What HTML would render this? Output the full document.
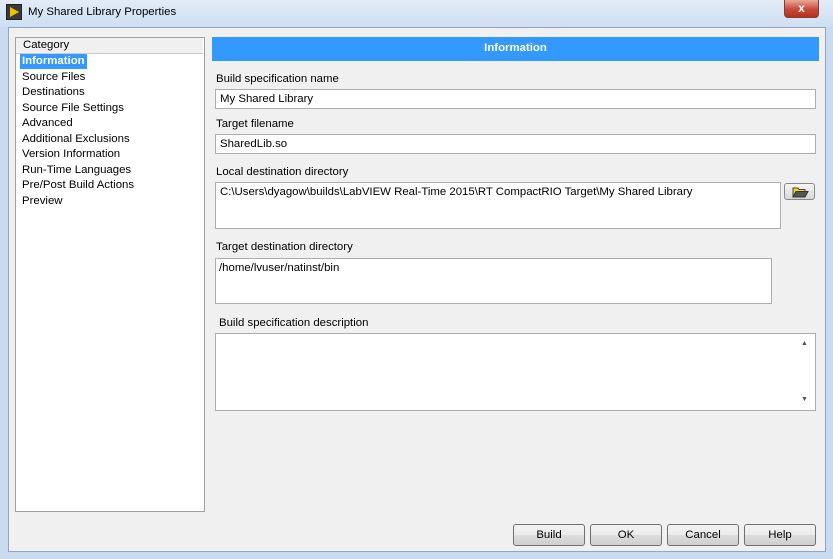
<!DOCTYPE html>
<html><head><meta charset="utf-8"><style>
*{margin:0;padding:0;box-sizing:border-box}
body{width:833px;height:559px;overflow:hidden;background:#c9dcef;font-family:"Liberation Sans",sans-serif;font-size:11.4px;color:#000;position:relative}
.a{position:absolute}
.title{left:0;top:0;width:833px;height:27px;background:linear-gradient(#e2ecf8,#cddff1)}
.client{left:8px;top:27px;width:818px;height:525px;background:#f0f0f0;border:1px solid #8ea6c2}
.box{background:#fff;border:1px solid #abadb3}
.it{left:22px;line-height:15px}
.btn{top:524px;width:72px;height:22px;border:1px solid #707070;border-radius:3px;background:linear-gradient(#f2f2f2 0%,#ebebeb 50%,#dddddd 51%,#cfcfcf 100%);text-align:center;line-height:20px}
</style></head><body>
<div class="a title"></div>
<div class="a" style="left:6px;top:4px;width:16px;height:16px;background:#3a3a3a;border:1px solid #222"><div class="a" style="left:3px;top:2px;width:0;height:0;border-left:9px solid #f2c200;border-top:5px solid transparent;border-bottom:5px solid transparent"></div></div>
<div class="a" style="left:28px;top:6px">My Shared Library Properties</div>
<div class="a" style="left:784px;top:0;width:35px;height:18px;background:linear-gradient(#e9a99a,#c7493a 55%,#b5301f);border:1px solid #8a3a30;border-top:none;border-radius:0 0 4px 4px;color:#fff;font-weight:bold;text-align:center;line-height:16px;font-size:12px">x</div>
<div class="a client"></div>
<div class="a box" style="left:15px;top:37px;width:190px;height:475px;border-color:#a0a0a0"></div>
<div class="a" style="left:16px;top:38px;width:187px;height:16px;background:#f0f0f0;border-bottom:1px solid #ccc"></div>
<div class="a" style="left:23px;top:39px">Category</div>
<div class="a it" style="top:54px;left:20px;background:#3399ff;color:#fff;padding:0 2px;font-weight:bold">Information</div>
<div class="a it" style="top:70px">Source Files</div>
<div class="a it" style="top:85px">Destinations</div>
<div class="a it" style="top:101px">Source File Settings</div>
<div class="a it" style="top:116px">Advanced</div>
<div class="a it" style="top:132px">Additional Exclusions</div>
<div class="a it" style="top:147px">Version Information</div>
<div class="a it" style="top:163px">Run-Time Languages</div>
<div class="a it" style="top:178px">Pre/Post Build Actions</div>
<div class="a it" style="top:194px">Preview</div>
<div class="a" style="left:212px;top:37px;width:607px;height:24px;background:#3399ff;color:#fff;font-weight:bold;text-align:center;line-height:23px">Information</div>
<div class="a" style="left:216px;top:73px">Build specification name</div>
<div class="a box" style="left:215px;top:89px;width:601px;height:20px;padding:3px 4px">My Shared Library</div>
<div class="a" style="left:216px;top:118px">Target filename</div>
<div class="a box" style="left:215px;top:134px;width:601px;height:20px;padding:3px 4px">SharedLib.so</div>
<div class="a" style="left:216px;top:166px">Local destination directory</div>
<div class="a box" style="left:215px;top:182px;width:566px;height:47px;padding:3px 4px">C:\Users\dyagow\builds\LabVIEW Real-Time 2015\RT CompactRIO Target\My Shared Library</div>
<div class="a" style="left:784px;top:183px;width:31px;height:17px;border:1px solid #888;border-radius:3px;background:linear-gradient(#f6f6f6,#d6d6d6)">
<svg class="a" style="left:7px;top:3px" width="17" height="11" viewBox="0 0 17 11"><path d="M1 1h5l1 1.5h6v2H4L1 10z" fill="#f0e000" stroke="#444"/><path d="M1 10l3-5.5h12L13 10z" fill="#555" stroke="#333"/></svg></div>
<div class="a" style="left:216px;top:241px">Target destination directory</div>
<div class="a box" style="left:215px;top:258px;width:557px;height:46px;padding:3px 3px">/home/lvuser/natinst/bin</div>
<div class="a" style="left:219px;top:317px">Build specification description</div>
<div class="a box" style="left:215px;top:333px;width:601px;height:78px"></div>
<div class="a" style="left:801px;top:340px;font-size:7px;color:#555">▲</div>
<div class="a" style="left:801px;top:396px;font-size:7px;color:#555">▼</div>
<div class="a btn" style="left:513px">Build</div>
<div class="a btn" style="left:590px">OK</div>
<div class="a btn" style="left:667px">Cancel</div>
<div class="a btn" style="left:744px">Help</div>
</body></html>
